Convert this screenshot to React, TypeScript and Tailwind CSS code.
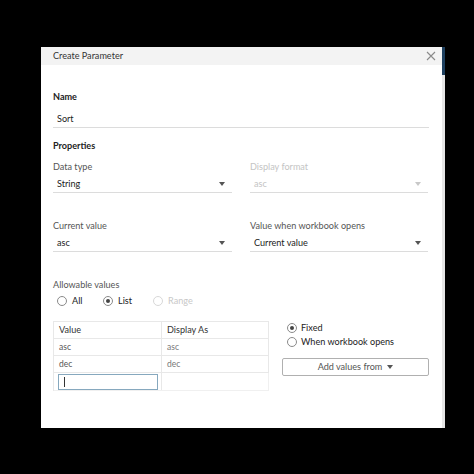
import React from "react";

function Caret({ light }: { light?: boolean }) {
  return (
    <svg width="6" height="4" viewBox="0 0 6 4" className="shrink-0">
      <path d="M0 0 L6 0 L3 4 Z" fill={light ? "#c8c8c8" : "#555"} />
    </svg>
  );
}

function Radio({ checked, disabled }: { checked?: boolean; disabled?: boolean }) {
  return (
    <span
      className={
        "w-[10px] h-[10px] rounded-full border flex items-center justify-center shrink-0 bg-white " +
        (disabled ? "border-[#d8d8d8]" : "border-[#8a8a8a]")
      }
    >
      {checked ? <span className="w-[4px] h-[4px] rounded-full bg-[#444]" /> : null}
    </span>
  );
}

function Select({ value, disabled }: { value: string; disabled?: boolean }) {
  return (
    <div className="h-[20px] border-b border-[#dcdcdc] flex items-end pb-[2px] justify-between pl-[4px] pr-[7px]">
      <span className={disabled ? "text-[#c4c4c4]" : "text-[#222]"}>{value}</span>
      <span className="pb-[4px]">
        <Caret light={disabled} />
      </span>
    </div>
  );
}

export default function App() {
  return (
    <div
      className="w-[474px] h-[474px] bg-black pt-[47px] pl-[41px] flex"
      style={{ fontFamily: "Lato, 'Open Sans', sans-serif" }}
    >
      <div className="w-[401px] h-[381px] bg-white flex flex-col text-[9.1px] leading-[12px] text-[#333]">
        <div className="h-[18px] bg-[#f3f3f3] flex items-center justify-between pl-[12px] pr-[6px]">
          <span className="text-[#333]">Create Parameter</span>
          <svg width="10" height="10" viewBox="0 0 10 10">
            <path d="M1 1 L9 9 M9 1 L1 9" stroke="#8a8a8a" strokeWidth="1.1" />
          </svg>
        </div>
        <div className="pl-[12px] pr-[13px] flex flex-col">
          <div className="mt-[26px] font-bold text-[#222]">Name</div>
          <div className="mt-[1px] h-[24px] border-b border-[#dcdcdc] flex items-end pb-[2px] pl-[4px] text-[#222]">
            Sort
          </div>
          <div className="mt-[12px] font-bold text-[#222]">Properties</div>
          <div className="grid grid-cols-[179px_178px] gap-x-[18px]">
            <div className="flex flex-col">
              <div className="mt-[9px] text-[#555]">Data type</div>
              <Select value="String" />
              <div className="mt-[27px] text-[#555]">Current value</div>
              <Select value="asc" />
            </div>
            <div className="flex flex-col">
              <div className="mt-[9px] text-[#c4c4c4]">Display format</div>
              <Select value="asc" disabled />
              <div className="mt-[27px] text-[#555]">Value when workbook opens</div>
              <Select value="Current value" />
            </div>
          </div>
          <div className="mt-[27px] text-[#555]">Allowable values</div>
          <div className="mt-[4px] h-[12px] flex items-center pl-[4px]">
            <Radio />
            <span className="ml-[5px] w-[31px] text-[#222]">All</span>
            <Radio checked />
            <span className="ml-[5px] w-[35px] text-[#222]">List</span>
            <Radio disabled />
            <span className="ml-[5px] text-[#c8c8c8]">Range</span>
          </div>
          <div className="mt-[14px] flex">
            <div className="w-[216px] border-l border-t border-[#e8e8e8] flex flex-col">
              <div className="grid grid-cols-[108px_107px] h-[17px] border-b border-[#e8e8e8]">
                <div className="pl-[5px] flex items-center border-r border-[#e8e8e8] text-[#333]">Value</div>
                <div className="pl-[5px] flex items-center border-r border-[#e8e8e8] text-[#333]">Display As</div>
              </div>
              <div className="grid grid-cols-[108px_107px] h-[17px] border-b border-[#e8e8e8] text-[8.5px] text-[#555]">
                <div className="pl-[5px] flex items-center border-r border-[#e8e8e8]">asc</div>
                <div className="pl-[5px] flex items-center border-r border-[#e8e8e8] text-[#777]">asc</div>
              </div>
              <div className="grid grid-cols-[108px_107px] h-[17px] border-b border-[#e8e8e8] text-[8.5px] text-[#555]">
                <div className="pl-[5px] flex items-center border-r border-[#e8e8e8]">dec</div>
                <div className="pl-[5px] flex items-center border-r border-[#e8e8e8] text-[#777]">dec</div>
              </div>
              <div className="grid grid-cols-[108px_107px] h-[18px] border-b border-[#f0f0f0]">
                <div className="border-r border-[#e8e8e8] flex items-center pl-[4px]">
                  <div className="w-[100px] h-[16px] border border-[#86a8be] flex items-center pl-[5px]">
                    <span className="w-px h-[10px] bg-[#333]" />
                  </div>
                </div>
                <div className="border-r border-[#f0f0f0]" />
              </div>
            </div>
            <div className="ml-[13px] w-[148px] flex flex-col">
              <div className="mt-[1px] h-[12px] flex items-center pl-[5px]">
                <Radio checked />
                <span className="ml-[4px] text-[#222]">Fixed</span>
              </div>
              <div className="mt-[2px] h-[12px] flex items-center pl-[5px]">
                <Radio />
                <span className="ml-[4px] text-[#222]">When workbook opens</span>
              </div>
              <div className="mt-[10px] h-[18px] border border-[#b0b0b0] rounded-[2px] flex items-center justify-center gap-[5px] text-[#555]">
                <span>Add values from</span>
                <Caret />
              </div>
            </div>
          </div>
        </div>
      </div>
      <div className="w-[3px] h-[381px] flex flex-col">
        <div className="h-[28px] bg-[#1d3f5e]" />
        <div className="flex-1 bg-[#e6e6e6]" />
      </div>
    </div>
  );
}
